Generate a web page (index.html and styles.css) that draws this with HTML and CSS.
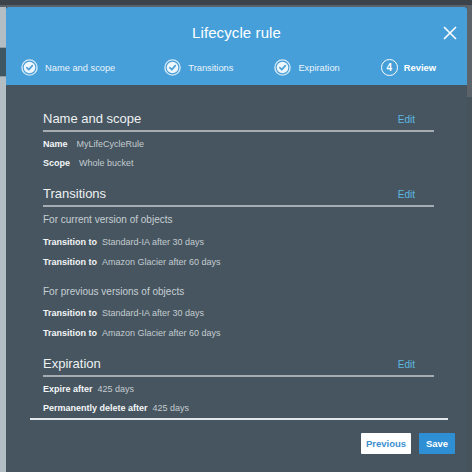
FILE: index.html
```html
<!DOCTYPE html>
<html>
<head>
<meta charset="utf-8">
<link rel="stylesheet" href="styles.css">
</head>
<body>
<div class="page">
  <div class="topbar"></div>
  <div class="main">
    <div class="leftstrip">
      <div class="ls-a"></div>
      <div class="ls-band"></div>
      <div class="ls-b"></div>
    </div>
    <div class="modal">
      <div class="header">
        <div class="title-row">
          <h1 class="title">Lifecycle rule</h1>
          <svg class="close" width="14" height="14" viewBox="0 0 14 14"><path d="M1 1 L13 13 M13 1 L1 13" stroke="#fff" stroke-width="1.6" fill="none"/></svg>
        </div>
        <div class="steps">
          <div class="step step-first">
            <span class="check"><svg width="17" height="17" viewBox="0 0 17 17"><circle cx="8.5" cy="8.5" r="7.6" fill="none" stroke="rgba(255,255,255,0.75)" stroke-width="1.4"/><circle cx="8.5" cy="8.5" r="5.8" fill="rgba(255,255,255,0.9)"/><path d="M5.8 8.7 L7.8 10.6 L11.3 6.6" stroke="#4a9fd8" stroke-width="1.6" fill="none" stroke-linecap="round" stroke-linejoin="round"/></svg></span>
            <span class="step-label">Name and scope</span>
          </div>
          <div class="step">
            <span class="check"><svg width="17" height="17" viewBox="0 0 17 17"><circle cx="8.5" cy="8.5" r="7.6" fill="none" stroke="rgba(255,255,255,0.75)" stroke-width="1.4"/><circle cx="8.5" cy="8.5" r="5.8" fill="rgba(255,255,255,0.9)"/><path d="M5.8 8.7 L7.8 10.6 L11.3 6.6" stroke="#4a9fd8" stroke-width="1.6" fill="none" stroke-linecap="round" stroke-linejoin="round"/></svg></span>
            <span class="step-label">Transitions</span>
          </div>
          <div class="step">
            <span class="check"><svg width="17" height="17" viewBox="0 0 17 17"><circle cx="8.5" cy="8.5" r="7.6" fill="none" stroke="rgba(255,255,255,0.75)" stroke-width="1.4"/><circle cx="8.5" cy="8.5" r="5.8" fill="rgba(255,255,255,0.9)"/><path d="M5.8 8.7 L7.8 10.6 L11.3 6.6" stroke="#4a9fd8" stroke-width="1.6" fill="none" stroke-linecap="round" stroke-linejoin="round"/></svg></span>
            <span class="step-label">Expiration</span>
          </div>
          <div class="step">
            <span class="num">4</span>
            <span class="step-label current">Review</span>
          </div>
        </div>
      </div>
      <div class="body">
        <div class="content">
          <div class="section first">
            <div class="section-head"><span class="section-title">Name and scope</span><span class="edit">Edit</span></div>
            <div class="rows top">
              <div class="row"><b>Name</b><span class="val wide">MyLifeCycleRule</span></div>
              <div class="row"><b>Scope</b><span class="val wide">Whole bucket</span></div>
            </div>
          </div>
          <div class="section">
            <div class="section-head"><span class="section-title">Transitions</span><span class="edit">Edit</span></div>
            <div class="group top">
              <div class="sub">For current version of objects</div>
              <div class="rows">
                <div class="row"><b>Transition to</b><span class="val">Standard-IA after 30 days</span></div>
                <div class="row"><b>Transition to</b><span class="val">Amazon Glacier after 60 days</span></div>
              </div>
            </div>
            <div class="group next">
              <div class="sub">For previous versions of objects</div>
              <div class="rows">
                <div class="row"><b>Transition to</b><span class="val">Standard-IA after 30 days</span></div>
                <div class="row"><b>Transition to</b><span class="val">Amazon Glacier after 60 days</span></div>
              </div>
            </div>
          </div>
          <div class="section">
            <div class="section-head"><span class="section-title">Expiration</span><span class="edit">Edit</span></div>
            <div class="rows tight">
              <div class="row"><b>Expire after</b><span class="val">425 days</span></div>
              <div class="row"><b>Permanently delete after</b><span class="val">425 days</span></div>
            </div>
          </div>
        </div>
        <div class="footer-line"></div>
        <div class="actions">
          <button class="btn btn-prev">Previous</button>
          <button class="btn btn-save">Save</button>
        </div>
      </div>
    </div>
    <div class="rightstrip"></div>
  </div>
</div>
</body>
</html>
```

FILE: styles.css
```css
* { box-sizing: border-box; }
html, body { margin: 0; padding: 0; }
body {
  width: 472px;
  height: 472px;
  overflow: hidden;
  font-family: "Liberation Sans", Arial, Helvetica, sans-serif;
  background: #4b5259;
}
.page { display: flex; flex-direction: column; height: 472px; }
.topbar { height: 7px; background: linear-gradient(#3d434a 0 5px, #5b6168 5px); flex: none; }
.main { flex: 1; display: flex; min-height: 0; }
.leftstrip { width: 6px; flex: none; display: flex; flex-direction: column; background: #b3bec4; }
.ls-a { height: 41px; border-bottom: 1px solid #8f9ba2; }
.ls-band { height: 28px; background: #3f5663; }
.ls-b { flex: 1; border-top: 1px solid #8f9ba2; }
.rightstrip { width: 5px; flex: none; background: linear-gradient(#5d636a 0 90px, #47535b 90px); }

.modal { flex: 1; display: flex; flex-direction: column; background: #46555f; border-radius: 3px 3px 0 0; overflow: hidden; }
.header { background: #469fd9; height: 78px; flex: none; padding-top: 17px; }
.title-row { display: flex; justify-content: center; align-items: center; position: relative; height: 18px; }
.title { margin: 0; font-weight: normal; color: #fff; font-size: 15px; line-height: 18px; letter-spacing: 0.1px; }
.close { position: absolute; right: 10px; top: 2px; }

.steps { display: flex; align-items: center; padding-left: 15px; margin-top: 17px; }
.step { display: flex; align-items: center; margin-right: 41px; flex: none; white-space: nowrap; }
.step-first { margin-right: 49px; }
.check { width: 17px; height: 17px; display: block; flex: none; }
.check svg { display: block; }
.num { width: 17px; height: 17px; flex: none; border: 1.5px solid #fff; border-radius: 50%; color: #fff; font-size: 10px; font-weight: bold; display: flex; align-items: center; justify-content: center; line-height: 1; }
.step-label { color: #eaf4fb; font-size: 9.3px; margin-left: 7px; }
.step-label.current { font-weight: bold; color: #fff; margin-left: 6px; font-size: 9.4px; }

.body { flex: 1; display: flex; flex-direction: column; }
.content { margin: 0 33px 0 37px; }
.section { margin-top: 13px; }
.section.first { margin-top: 26px; }
.section-head { display: flex; justify-content: space-between; align-items: baseline; padding-bottom: 3px; border-bottom: 2px solid #a6adb2; }
.section-title { color: #eef1f3; font-size: 13px; line-height: 16px; }
.edit { color: #5db8e2; font-size: 10px; margin-right: 19px; }
.rows.top { margin-top: 2.5px; }
.rows.tight { margin-top: 2.5px; }
.row { font-size: 9px; line-height: 19px; color: #fff; white-space: nowrap; }
.row b { color: #f4f6f8; }
.val { color: #c4ccd1; margin-left: 5px; }
.val.wide { margin-left: 9px; }
.group.top { margin-top: 3.5px; }
.group.next { margin-top: 10px; }
.sub { font-size: 10px; line-height: 19px; color: #c7cfd4; }
.group .rows { margin-top: 4px; }
.group.next .rows { margin-top: 3px; }
.group .row + .row { margin-top: 1px; }

.footer-line { margin: 0 19px 0 24px; border-top: 2px solid #e3e7ea; }
.actions { display: flex; justify-content: flex-end; gap: 8px; margin: 13px 12px 0 0; }
.btn { font-family: "Liberation Sans", Arial, sans-serif; font-size: 9.5px; font-weight: bold; height: 21px; border: 0; padding: 0; border-radius: 1px; }
.btn-prev { width: 50px; background: #fff; color: #3b8fcf; }
.btn-save { width: 36px; background: #2f8fd5; color: #fff; }
```
